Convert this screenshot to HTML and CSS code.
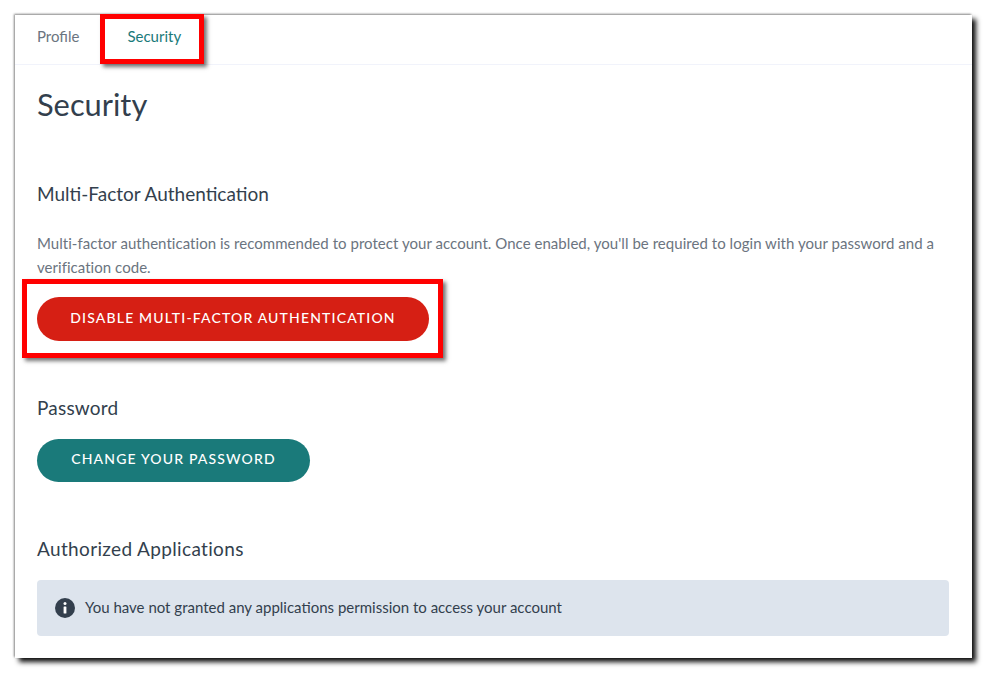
FILE: index.html
```html
<!DOCTYPE html>
<html lang="en">
<head>
    <meta charset="UTF-8">
    <meta name="viewport" content="width=device-width, initial-scale=1.0">
    <title>Security</title>
    <link rel="stylesheet" href="styles.css">
</head>
<body>

<div class="card">
    <nav class="tabs">
        <a class="tab" href="#">Profile</a>
        <a class="tab active" href="#">Security</a>
    </nav>
    <div class="highlight highlight-tab"></div>

    <main class="content">
        <h1>Security</h1>

        <h2 class="first">Multi-Factor Authentication</h2>
        <p>Multi-factor authentication is recommended to protect your account. Once enabled, you'll be required to login with your password and a verification code.</p>
        <button class="btn btn-red" type="button">Disable Multi-Factor Authentication</button>
        <div class="highlight highlight-btn"></div>

        <h2 class="password">Password</h2>
        <button class="btn btn-teal" type="button">Change Your Password</button>

        <h2 class="apps">Authorized Applications</h2>
        <div class="alert">
            <svg class="alert-icon" viewBox="0 0 20 20" width="20" height="20">
                <circle cx="10" cy="10" r="10" fill="#333f4d"/>
                <circle cx="10" cy="5.6" r="1.5" fill="#fff"/>
                <rect x="8.6" y="8.4" width="2.8" height="7" rx="0.5" fill="#fff"/>
            </svg>
            <span class="alert-text">You have not granted any applications permission to access your account</span>
        </div>
    </main>
</div>

</body>
</html>
```

FILE: styles.css
```css
* {
    box-sizing: border-box;
}
body {
    margin: 0;
    padding: 15px 27px 27px 15px;
    background-color: white;
    font-family: Lato, "Open Sans", sans-serif;
    color: #333f4d;
}
.card {
    position: relative;
    width: 957px;
    height: 643px;
    background-color: white;
    box-shadow: 4px 4px 5px rgba(0, 0, 0, 0.95), -1px -1px 2px rgba(0, 0, 0, 0.45);
}
.tabs {
    display: flex;
    height: 50px;
    padding-left: 22px;
    border-bottom: 1px solid #f1f3fb;
}
.tab {
    margin-right: 48px;
    padding-top: 11px;
    font-size: 15px;
    line-height: 20px;
    color: #6b7480;
    text-decoration: none;
}
.tab.active {
    color: #1a7a7a;
}
.content {
    padding: 0 23px 0 22px;
}
h1 {
    margin: 21px 0 0;
    font-size: 30.8px;
    font-weight: 400;
    line-height: 38px;
}
h2 {
    margin: 0;
    font-size: 19px;
    font-weight: 400;
    line-height: 24px;
}
h2.first {
    margin-top: 58px;
}
h2.password {
    margin-top: 55px;
    letter-spacing: 0.2px;
}
h2.apps {
    margin-top: 55px;
    letter-spacing: 0.35px;
}
p {
    margin: 25px 0 18px;
    font-size: 15px;
    letter-spacing: 0.04px;
    line-height: 24px;
    color: #6b7480;
}
.btn {
    display: block;
    height: 44px;
    padding: 0 0 4px;
    border: none;
    border-radius: 22px;
    font-family: inherit;
    font-size: 14px;
    font-weight: 500;
    letter-spacing: 1.16px;
    text-transform: uppercase;
    white-space: nowrap;
    color: white;
    cursor: pointer;
}
.btn-red {
    width: 392px;
    background-color: #d61f14;
}
.btn-teal {
    width: 273px;
    height: 43px;
    margin-top: 19px;
    background-color: #1a7a7a;
}
.alert {
    display: flex;
    align-items: center;
    gap: 10px;
    height: 56px;
    margin-top: 19px;
    padding-left: 18px;
    border-radius: 4px;
    background-color: #dde4ed;
    font-size: 15px;
}
.alert-icon {
    flex-shrink: 0;
}
.alert-text {
    padding-bottom: 2px;
}
/* red annotation boxes drawn on top of the screenshot */
.highlight {
    position: absolute;
    border: 5px solid #ff0000;
    box-shadow: 3px 3px 4px rgba(0, 0, 0, 0.55);
}
.highlight-tab {
    left: 85px;
    top: -1px;
    width: 104px;
    height: 50px;
}
.highlight-btn {
    left: 7px;
    top: 264px;
    width: 421px;
    height: 79px;
}
```
